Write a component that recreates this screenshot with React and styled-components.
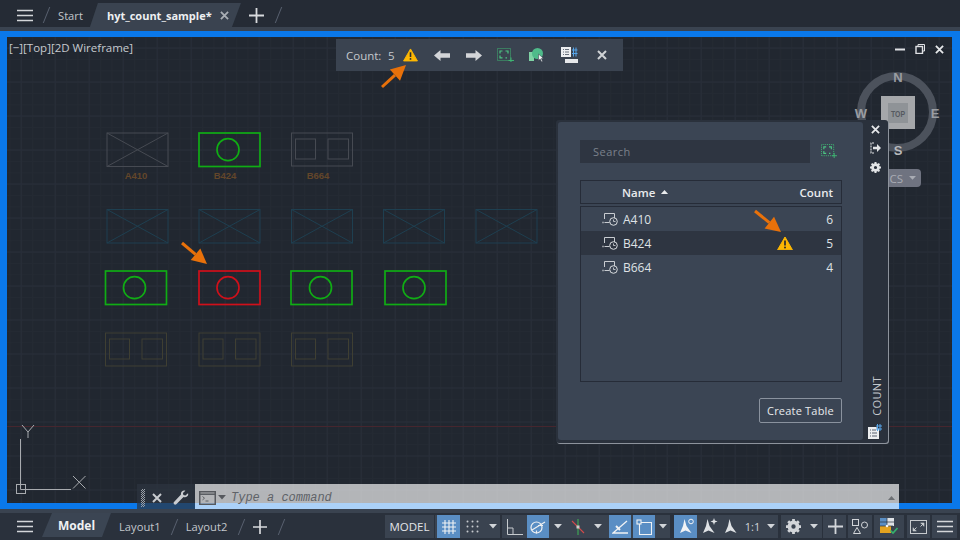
import React from 'react'
import styled, { createGlobalStyle } from 'styled-components'

const GlobalStyle = createGlobalStyle`
    html, body {
        margin: 0;
        padding: 0;
        background: #2a313c;
    }

    body {
        font-family: "Open Sans", "Noto Sans", sans-serif;
    }
`;

const Page = styled.div`
    display: flex;
    flex-direction: column;
    width: 960px;
    height: 540px;
    overflow: hidden;
    background: #2a313c;
`;

/* ---- top tab strip ---- */

const TabStrip = styled.div`
    display: flex;
    align-items: stretch;
    height: 27px;
    flex: none;
    padding-top: 3px;
    box-sizing: border-box;
    background: #252b35;
`;

const StripBand = styled.div`
    height: ${p => p.$h}px;
    flex: none;
    background: #3a4350;
`;

const MenuSlot = styled.div`
    display: flex;
    align-items: center;
    justify-content: center;
    width: ${p => p.$w}px;
    flex: none;
    padding-left: ${p => p.$pl || 0}px;
    box-sizing: border-box;
`;

const Slash = styled.div`
    width: 1px;
    height: 16px;
    flex: none;
    align-self: center;
    margin: ${p => p.$m || '0'};
    background: #596170;
    transform: skewX(-22deg);
`;

const PlainTab = styled.div`
    display: flex;
    align-items: center;
    margin-left: ${p => p.$ml}px;
    font-size: 11.2px;
    color: #c3c7cc;
    white-space: nowrap;
`;

const ActiveTab = styled.div`
    display: flex;
    align-items: center;
    width: 151px;
    flex: none;
    margin-left: 7px;
    padding-left: 17px;
    box-sizing: border-box;
    gap: 8px;
    background: #3a4350;
    clip-path: polygon(8px 0, 100% 0, 142px 100%, 0 100%);
    font-size: 11px;
    font-weight: 700;
    color: #eef0f2;
    white-space: nowrap;
`;

const PlusSlot = styled.div`
    display: flex;
    align-items: center;
    margin-left: ${p => p.$ml}px;
`;

/* ---- viewport ---- */

const Viewport = styled.div`
    position: relative;
    flex: none;
    height: 478px;
    box-sizing: border-box;
    border-style: solid;
    border-color: #0a78ea;
    border-width: 6px 8px 6px 7px;
    background: #212730;
`;

const Canvas = styled.svg`
    display: block;
    width: 945px;
    height: 466px;
`;

const ViewLabel = styled.div`
    position: absolute;
    left: 2px;
    top: 3px;
    font-size: 11.5px;
    color: #c6cacf;
    white-space: nowrap;
`;

const WindowControls = styled.div`
    position: absolute;
    right: 8px;
    top: 7px;
    display: flex;
    align-items: center;
    gap: 10px;
`;

const CountBar = styled.div`
    position: absolute;
    left: 329px;
    top: 2px;
    display: flex;
    align-items: center;
    width: 287px;
    height: 32px;
    padding-left: 10px;
    box-sizing: border-box;
    background: #3a4350;
    color: #c4c8cd;
    font-size: 11.5px;
`;

const CountLabel = styled.span`
    width: 42px;
    flex: none;
`;

const CountValue = styled.span`
    width: 12px;
    flex: none;
`;

const BarIcon = styled.div`
    display: flex;
    align-items: center;
    justify-content: center;
    width: ${p => p.$w || 32}px;
    height: 32px;
    flex: none;
    margin-left: ${p => p.$ml || 0}px;
`;

const Pointer = styled.svg`
    position: absolute;
    left: ${p => p.$x}px;
    top: ${p => p.$y}px;
    z-index: 3;
`;

/* ---- view cube ---- */

const UcsPill = styled.div`
    position: absolute;
    left: 865px;
    top: 132px;
    display: flex;
    align-items: center;
    justify-content: flex-end;
    gap: 6px;
    width: 49px;
    height: 18px;
    padding-right: 5px;
    box-sizing: border-box;
    border-radius: 4px;
    background: #6f7380;
    color: #a9acb4;
    font-size: 11.5px;
`;

/* ---- count palette ---- */

const Palette = styled.div`
    position: absolute;
    left: 549px;
    top: 83px;
    display: flex;
    width: 332px;
    height: 323px;
    box-sizing: border-box;
    padding: 2px 0 3px 2px;
    background: #2a313c;
    border-radius: 3px;
    box-shadow: 1px 1px 0 #8d939c;
`;

const PaletteMain = styled.div`
    display: flex;
    flex-direction: column;
    width: 305px;
    flex: none;
    box-sizing: border-box;
    padding: 18px 21px 17px 22px;
    border-radius: 3px;
    background: #3b4554;
`;

const SearchRow = styled.div`
    display: flex;
    align-items: center;
    gap: 11px;
`;

const SearchBox = styled.div`
    display: flex;
    align-items: center;
    width: 230px;
    height: 23px;
    padding-left: 13px;
    box-sizing: border-box;
    background: #2e3541;
    color: #7b818c;
    font-size: 11px;
    letter-spacing: 0.5px;
`;

const Table = styled.div`
    display: flex;
    flex-direction: column;
    margin-top: 17px;
    width: 262px;
`;

const TableHead = styled.div`
    display: flex;
    align-items: center;
    justify-content: space-between;
    height: 24px;
    padding: 0 8px 0 41px;
    box-sizing: border-box;
    border: 1px solid #262c38;
    color: #e9ebed;
    font-size: 11.5px;
    font-weight: 600;
`;

const HeadName = styled.div`
    display: flex;
    align-items: center;
    gap: 5px;
`;

const TableBody = styled.div`
    display: flex;
    flex-direction: column;
    height: 176px;
    margin-top: 2px;
    box-sizing: border-box;
    border: 1px solid #262c38;
`;

const Row = styled.div`
    display: flex;
    align-items: center;
    height: 24px;
    flex: none;
    padding: 0 8px 0 21px;
    background: ${p => (p.$selected ? '#2e3541' : 'transparent')};
    color: #dfe2e5;
    font-size: 12px;
`;

const RowName = styled.span`
    flex: 1;
    margin-left: 5px;
`;

const RowCount = styled.span`
    margin-left: 33px;
`;

const TableFoot = styled.div`
    display: flex;
    justify-content: flex-end;
    margin-top: auto;
    width: 262px;
`;

const CreateButton = styled.button`
    width: 83px;
    height: 25px;
    padding: 0;
    border: 1px solid #8a929e;
    border-radius: 2px;
    background: transparent;
    color: #e8eaec;
    font-family: inherit;
    font-size: 11px;
    letter-spacing: 0.2px;
`;

const SideRail = styled.div`
    display: flex;
    flex-direction: column;
    align-items: center;
    flex: 1;
    padding: 0 0 2px;
    gap: 5px;
`;

const RailIcon = styled.div`
    display: flex;
    align-items: center;
    justify-content: center;
    height: 14px;
    margin-left: -1px;
`;

const RailTitle = styled.div`
    margin-top: auto;
    margin-left: 2px;
    margin-bottom: 3px;
    writing-mode: vertical-rl;
    transform: rotate(180deg);
    color: #c4c8cd;
    font-size: 11px;
    letter-spacing: 0.4px;
`;

/* ---- command line ---- */

const CommandLine = styled.div`
    position: absolute;
    left: 130px;
    bottom: -6px;
    display: flex;
    width: 762px;
    height: 25px;
    z-index: 2;
`;

const CommandTools = styled.div`
    display: flex;
    align-items: center;
    width: 58px;
    flex: none;
    padding: 2px 0 0 4px;
    box-sizing: border-box;
    gap: 7px;
    background: rgba(44, 52, 64, 0.72);
`;

const Grip = styled.div`
    width: 4px;
    height: 18px;
    background-image: repeating-conic-gradient(#9aa0a8 0 25%, transparent 0 50%);
    background-size: 2px 2px;
`;

const ToolSlot = styled.div`
    display: flex;
    margin-left: ${p => p.$ml || 0}px;
`;

const CommandInput = styled.div`
    display: flex;
    align-items: center;
    flex: 1;
    gap: 2px;
    padding: 2px 4px 0 4px;
    background: rgba(255, 255, 255, 0.66);
`;

const CommandText = styled.span`
    flex: 1;
    margin-left: 3px;
    font-family: "Liberation Mono", monospace;
    font-style: italic;
    font-size: 12px;
    color: #5f6368;
`;

/* ---- status bar ---- */

const StatusBar = styled.div`
    display: flex;
    align-items: stretch;
    flex: none;
    height: 27px;
    background: #2a313c;
`;

const ModelTab = styled.div`
    display: flex;
    align-items: center;
    justify-content: center;
    width: 69px;
    height: 24px;
    flex: none;
    background: #3b4553;
    clip-path: polygon(10px 0, 100% 0, 60px 100%, 0 100%);
    color: #f0f1f3;
    font-size: 12px;
    font-weight: 700;
`;

const StatusGroups = styled.div`
    display: flex;
    margin-left: auto;
    padding: 2px 3px 2px 0;
`;

const Group = styled.div`
    display: flex;
    align-items: stretch;
    width: ${p => p.$w}px;
    flex: none;
    margin-left: ${p => p.$ml || 0}px;
    background: #3a4350;
`;

const ModelButton = styled.div`
    display: flex;
    align-items: center;
    justify-content: center;
    width: 49px;
    flex: none;
    margin-right: 2px;
    border-right: 1px solid #2a313c;
    color: #e3e5e8;
    font-size: 11.5px;
`;

const StatusButton = styled.div`
    display: flex;
    align-items: center;
    justify-content: center;
    width: ${p => p.$w}px;
    flex: none;
    margin-left: ${p => p.$ml || 0}px;
    background: ${p => (p.$active ? '#5a8ec4' : 'transparent')};
    border-left: ${p => (p.$rule ? '1px solid #2a313c' : '0')};
    color: #d2d5d9;
    font-size: 11px;
`;

/* ---- icons ---- */

const Hamburger = ({ w = 16 }) => (
    <svg width={w} height="13" viewBox="0 0 16 13">
        <path d="M0 1.5h16M0 6.5h16M0 11.5h16" stroke="#d4d6d9" strokeWidth="1.7" />
    </svg>
);

const Plus = ({ size = 15, color = '#d8dadd' }) => (
    <svg width={size} height={size} viewBox="0 0 15 15">
        <path d="M7.5 0v15M0 7.5h15" stroke={color} strokeWidth="1.8" />
    </svg>
);

const Cross = ({ size = 10, color = '#d0d3d6', sw = 2 }) => (
    <svg width={size} height={size} viewBox="0 0 10 10">
        <path d="M1 1l8 8M9 1L1 9" stroke={color} strokeWidth={sw} />
    </svg>
);

const Warning = ({ size = 16 }) => (
    <svg width={size} height={size * 0.9} viewBox="0 0 16 14.4">
        <path d="M8 1L15.4 13.8H.6z" fill="#fdb702" stroke="#fdb702" strokeLinejoin="round" />
        <path d="M8 4.6v5" stroke="#2b2b2b" strokeWidth="1.7" />
        <circle cx="8" cy="11.6" r="1" fill="#2b2b2b" />
    </svg>
);

const Caret = ({ w = 9, color = '#d2d5d9', up }) => (
    <svg width={w} height={w * 0.55} viewBox="0 0 9 5">
        <path d={up ? 'M0 5h9L4.5 0z' : 'M0 0h9L4.5 5z'} fill={color} />
    </svg>
);

const ArrowGlyph = ({ flip }) => (
    <svg width="16" height="11" viewBox="0 0 16 11">
        <path d={flip ? 'M16 5.5L9.5 0v3.2H0v4.6h9.5V11z' : 'M0 5.5L6.5 0v3.2H16v4.6H6.5V11z'} fill="#d3d5d8" />
    </svg>
);

const SelectArea = ({ size = 17 }) => (
    <svg width={size} height={size * 0.88} viewBox="0 0 17 15">
        <rect x="0.5" y="0.5" width="13" height="12" fill="none" stroke="#3fb873" strokeDasharray="1 1" />
        <path d="M3 5.5V3h2.5M8.5 3H11v2.5M3 7.5V10h2.5M8.5 10H10" fill="none" stroke="#4cc583" strokeWidth="1.2" />
        <path d="M14 9.5V15M11.5 12.5H17" stroke="#3fb873" />
    </svg>
);

const ZoomObject = () => (
    <svg width="16" height="14" viewBox="0 0 16 14">
        <path d="M0 4h5v9H0z" fill="#7fd3a5" />
        <path d="M5 13H0V7z" fill="#7fd3a5" />
        <circle cx="8.5" cy="5.5" r="5.5" fill="#4fbb8a" />
        <path d="M9.5 6l5 4.4-2.2.2 1.3 2.6-1.2.6-1.2-2.7-1.7 1.4z" fill="#f2f3f4" stroke="#333a46" strokeWidth=".5" />
    </svg>
);

const TableIcon = () => (
    <svg width="17" height="17" viewBox="0 0 17 17">
        <path d="M0 0h10v10H0z" fill="#eceef0" />
        <path d="M2 2.5h1M4 2.5h4M2 5h1M4 5h4M2 7.5h1M4 7.5h4" stroke="#59616e" strokeWidth=".9" />
        <path d="M12.5 .5v9M15 .5v9M11 3h5.5M11 6.5h5.5" stroke="#57a6ea" strokeWidth="1" />
        <path d="M4 12h13v4H4z" fill="#e6e8ea" />
    </svg>
);

const CountDoc = () => (
    <svg width="14" height="15" viewBox="0 0 14 15">
        <path d="M0 3h8l3 2v10H0z" fill="#eceef0" />
        <path d="M2 6h1M4 6h4M2 9h1M4 9h5M2 12h1M4 12h5" stroke="#59616e" strokeWidth="1" />
        <path d="M9.5 0v7M12 0v7M8 2h6M8 5h6" stroke="#57a6ea" strokeWidth="1" />
    </svg>
);

const BlockIcon = () => (
    <svg width="16" height="13" viewBox="0 0 16 13">
        <path d="M2.5 6V.5h10V5" fill="none" stroke="#c8ccd1" />
        <path d="M.5 9.5h1" stroke="#eceef0" strokeWidth="1.4" />
        <path d="M2.5 9.5h5" stroke="#c8ccd1" />
        <circle cx="11.5" cy="8.5" r="3.8" fill="none" stroke="#d8dbde" />
        <path d="M11.5 6.5v2h2" fill="none" stroke="#d8dbde" strokeWidth=".8" />
    </svg>
);

const Gear = ({ size = 11, color = '#e2e4e6' }) => (
    <svg width={size} height={size} viewBox="0 0 24 24">
        <circle cx="12" cy="12" r="6.5" fill="none" stroke={color} strokeWidth="6" />
        <path d="M12 0v5M12 19v5M0 12h5M19 12h5M3.5 3.5L7 7M17 17l3.5 3.5M20.5 3.5L17 7M7 17l-3.5 3.5" stroke={color} strokeWidth="4.4" />
    </svg>
);

const ExportIcon = () => (
    <svg width="11" height="12" viewBox="0 0 11 12">
        <path d="M4 1H1v10h3" fill="none" stroke="#e2e4e6" strokeWidth="1.1" strokeDasharray="2 .8" />
        <path d="M3 4.7h4V2l4 4-4 4V7.3H3z" fill="#e2e4e6" />
    </svg>
);

const WrenchIcon = () => (
    <svg width="16" height="16" viewBox="0 0 16 16">
        <path d="M15 3.2l-2.6 2.4-2-.6-.5-2L12.4.8C10-.2 7.4 1.8 8 4.6L1 12c-1.4 1.6.8 3.6 2.3 2.2L10.5 7c3 .9 5.5-1.3 4.5-3.800z" fill="#c9ccd0" />
    </svg>
);

const PromptIcon = () => (
    <svg width="17" height="14" viewBox="0 0 17 14">
        <path d="M.75.75h15.5v12.5H.75z" fill="none" stroke="#56595e" strokeWidth="1.5" />
        <path d="M.75 3.2h15.5" stroke="#56595e" strokeWidth="1.5" />
        <path d="M3.5 5.5l2 1.7-2 1.7M6.5 10h3" fill="none" stroke="#56595e" strokeWidth=".9" />
    </svg>
);

const GridIcon = () => (
    <svg width="14" height="14" viewBox="0 0 14 14">
        <path d="M3 0v14M7 0v14M11 0v14M0 3h14M0 7h14M0 11h14" stroke="#f0f2f4" strokeWidth="1.1" />
    </svg>
);

const SnapDots = () => (
    <svg width="13" height="13" viewBox="0 0 13 13" fill="#c6cace">
        {[1.5, 6.5, 11.5].flatMap(y => [1.5, 6.5, 11.5].map(x => (
            <circle key={`${x}-${y}`} cx={x} cy={y} r="1" />
        )))}
    </svg>
);

const OrthoIcon = () => (
    <svg width="16" height="16" viewBox="0 0 16 16" fill="none" stroke="#c6cace">
        <path d="M.5 0v15.5H16" />
        <path d="M.5 9H6v6.5" />
    </svg>
);

const PolarIcon = () => (
    <svg width="16" height="14" viewBox="0 0 16 14" fill="none" stroke="#eef0f2" strokeWidth="1.2">
        <circle cx="6.5" cy="7.5" r="5.5" />
        <path d="M2 10L15 2M8 5.5h5M6.5 10.5v3" />
    </svg>
);

const IsoIcon = () => (
    <svg width="14" height="16" viewBox="0 0 14 16" fill="none">
        <path d="M7 0v16" stroke="#3fae55" strokeWidth="1.1" />
        <path d="M1 2l6 6" stroke="#d24b4b" strokeWidth="1.1" />
        <path d="M7 8l6 6" stroke="#d24b4b" strokeWidth="1.1" />
        <rect x="5.5" y="6.5" width="3" height="3" fill="#ccc" />
    </svg>
);

const AngleIcon = () => (
    <svg width="16" height="14" viewBox="0 0 16 14" fill="none" stroke="#f0f2f4" strokeWidth="1.3">
        <path d="M15 1L1 13h15" />
        <path d="M4 6l4 4" strokeWidth="2" stroke="#f0f2f4" />
    </svg>
);

const BoxIcon = () => (
    <svg width="16" height="16" viewBox="0 0 16 16" fill="none" stroke="#f0f2f4">
        <path d="M3.5 3.5h12v12h-12z" strokeWidth="1.1" />
        <rect x="1" y="1" width="4" height="4" fill="#5a8ec4" strokeWidth="1.1" />
    </svg>
);

const AnnotateIcon = ({ mark, color = '#dfe2e5' }) => (
    <svg width="18" height="17" viewBox="0 0 18 17">
        <path d="M7.5 1l2 7 5 7-6-2.500L3 15l3-7z" fill={color} />
        {mark === 'circle' && <circle cx="14" cy="3.5" r="2.3" fill="none" stroke={color} />}
        {mark === 'star' && <path d="M14 0l.9 2.6 2.6.9-2.6.9-.9 2.6-.9-2.6-2.6-.9 2.6-.9z" fill={color} />}
    </svg>
);

const ShapesIcon = () => (
    <svg width="16" height="15" viewBox="0 0 16 15" fill="none" stroke="#d2d5d9">
        <rect x=".5" y=".5" width="6" height="6" />
        <circle cx="12.5" cy="6" r="3" />
        <path d="M5 8.5l3.5 6h-7z" />
    </svg>
);

const WorkspaceIcon = () => (
    <svg width="18" height="17" viewBox="0 0 18 17">
        <path d="M0 0h7v8H0z" fill="#5a8ec4" />
        <path d="M7 0h7v8H7z" fill="#dfe2e6" />
        <path d="M0 8h11v7H0z" fill="#e3a320" />
        <path d="M7 0v8M0 4h14M0 8h13" stroke="#2a313c" strokeWidth=".7" />
        <circle cx="7" cy="8" r="1.3" fill="#f2f3f4" />
        <path d="M10.5 12.5l2.5 2.500 4.500-5" fill="none" stroke="#35b26c" strokeWidth="1.6" />
    </svg>
);

const FullscreenIcon = () => (
    <svg width="17" height="14" viewBox="0 0 17 14" fill="none" stroke="#c6cace">
        <rect x=".5" y=".5" width="16" height="13" />
        <path d="M3.5 10.5l3-3M10.5 6.5l3-3" />
        <path d="M3 7.5V11h3.5M10.5 3H14v3.5" fill="#c6cace" strokeWidth=".6" />
    </svg>
);

const OrangeArrow = ({ x1, y1, x2, y2 }) => {
    const w = Math.abs(x2 - x1);
    const h = Math.abs(y2 - y1);
    const len = Math.hypot(x2 - x1, y2 - y1);
    const ux = (x2 - x1) / len;
    const uy = (y2 - y1) / len;
    const bx = x2 - ux * 15;
    const by = y2 - uy * 15;
    const left = Math.min(x1, x2) - 7;
    const top = Math.min(y1, y2) - 7;
    const tx = x2 - left;
    const ty = y2 - top;
    const head = `${tx},${ty} ${bx - left - uy * 7.5},${by - top + ux * 7.5} ${bx - left + uy * 7.5},${by - top - ux * 7.5}`;
    return (
        <Pointer $x={left - 7} $y={top - 37} width={w + 14} height={h + 14}>
            <line x1={x1 - left} y1={y1 - top} x2={bx - left} y2={by - top} stroke="#e8710a" strokeWidth="3" />
            <polygon points={head} fill="#e8710a" />
        </Pointer>
    );
};

/* ---- drawing on the canvas ---- */

const GRAY = '#464a52';
const TEAL = '#1e3f50';
const OLIVE = '#3f3f32';
const GREEN = '#10ad14';
const RED = '#d0101a';

const CrossBlock = ({ x, y, color }) => (
    <g fill="none" stroke={color}>
        <rect x={x} y={y} width="61" height="33.5" />
        <path d={`M${x} ${y}l61 33.5M${x + 61} ${y}l-61 33.5`} />
    </g>
);

const CircleBlock = ({ x, y, cx, color }) => (
    <g fill="none" stroke={color} strokeWidth="1.7">
        <rect x={x} y={y} width="61" height="33.5" />
        <circle cx={cx} cy={y + 16.7} r="11" />
    </g>
);

const DoubleBlock = ({ x, y, color }) => (
    <g fill="none" stroke={color}>
        <rect x={x} y={y} width="61" height="33" />
        <rect x={x + 4} y={y + 6} width="20" height="20" />
        <rect x={x + 36.5} y={y + 6} width="20.5" height="20" />
    </g>
);

const BlockLabel = styled.text`
    font-family: "Liberation Sans", sans-serif;
    font-size: 9.5px;
    font-weight: 700;
    fill: #63462a;
    text-anchor: middle;
`;

const CubeLetter = styled.text`
    font-family: "Liberation Sans", sans-serif;
    font-size: 13px;
    font-weight: 700;
    fill: ${p => p.$fill || '#9a9da2'};
    text-anchor: middle;
`;

const CubeTop = styled.text`
    font-family: "Liberation Sans", sans-serif;
    font-size: 9.5px;
    font-weight: 700;
    fill: #55595f;
    text-anchor: middle;
`;

const Drawing = () => (
    <Canvas viewBox="7 37 945 466">
        <defs>
            <pattern id="minor" x="20.7" y="489.5" width="11.33" height="11.33" patternUnits="userSpaceOnUse">
                <path d="M.5 0v11.33M0 .5h11.33" stroke="#242a33" fill="none" />
            </pattern>
            <pattern id="major" x="20.7" y="489.5" width="34" height="34" patternUnits="userSpaceOnUse">
                <path d="M.5 0v34M0 .5h34" stroke="#282e39" fill="none" />
            </pattern>
        </defs>
        <rect x="7" y="37" width="945" height="466" fill="#212730" />
        <rect x="7" y="37" width="945" height="466" fill="url(#minor)" />
        <rect x="7" y="37" width="945" height="466" fill="url(#major)" />
        <path d="M7 426.5h945" stroke="#46262e" />

        <CrossBlock x={107} y={133} color={GRAY} />
        <CircleBlock x={199} y={133} cx={228} color={GREEN} />
        <DoubleBlock x={291.5} y={133} color={GRAY} />
        <BlockLabel x="136" y="178.5">A410</BlockLabel>
        <BlockLabel x="225" y="178.5">B424</BlockLabel>
        <BlockLabel x="318" y="178.5">B664</BlockLabel>

        {[107, 199, 291.5, 383.5, 476].map(x => (
            <CrossBlock key={x} x={x} y={209.5} color={TEAL} />
        ))}

        <CircleBlock x={105.5} y={271} cx={134.5} color={GREEN} />
        <CircleBlock x={199} y={271} cx={228} color={RED} />
        <CircleBlock x={291} y={271} cx={320.5} color={GREEN} />
        <CircleBlock x={385} y={271} cx={414} color={GREEN} />

        {[105.5, 199, 291.5].map(x => (
            <DoubleBlock key={x} x={x} y={333} color={OLIVE} />
        ))}

        <g fill="none" stroke="#a8abaf">
            <path d="M20.5 439v50.5H71" />
            <rect x="16.5" y="484.5" width="9" height="9" />
            <path d="M73 476l12.5 12.5M85.5 476L73 488.5" />
            <path d="M22 425l6 7 6-7M28 432v6" />
        </g>

        <circle cx="897" cy="112" r="36" fill="none" stroke="#4c525c" strokeWidth="8" />
        <rect x="881" y="96" width="34" height="33" fill="#a5a7aa" />
        <rect x="888" y="103" width="20" height="20" fill="#8f9397" />
        <CubeTop x="898" y="116.5" textLength="14" lengthAdjust="spacingAndGlyphs">TOP</CubeTop>
        <CubeLetter x="898" y="82">N</CubeLetter>
        <CubeLetter x="898" y="155" $fill="#b6b8bb">S</CubeLetter>
        <CubeLetter x="861" y="118">W</CubeLetter>
        <CubeLetter x="935" y="118">E</CubeLetter>
    </Canvas>
);

const blocks = [
    { name: 'A410', count: 6 },
    { name: 'B424', count: 5, warn: true },
    { name: 'B664', count: 4 },
];

export default function App() {
    return (
        <Page>
            <GlobalStyle />
            <TabStrip>
                <MenuSlot $w={50}><Hamburger /></MenuSlot>
                <Slash $m="0 0 0 -4px" />
                <PlainTab $ml={11}>Start</PlainTab>
                <ActiveTab>
                    hyt_count_sample*
                    <Cross size={9} color="#a9aeb5" />
                </ActiveTab>
                <PlusSlot $ml={8}><Plus /></PlusSlot>
                <Slash $m="0 0 0 14px" />
            </TabStrip>
            <StripBand $h={4} />
            <Viewport>
                <Drawing />
                <ViewLabel>[−][Top][2D Wireframe]</ViewLabel>
                <WindowControls>
                    <svg width="10" height="3" viewBox="0 0 10 3"><path d="M0 1.5h10" stroke="#dfe1e4" strokeWidth="2" /></svg>
                    <svg width="10" height="10" viewBox="0 0 10 10" fill="none" stroke="#dfe1e4">
                        <path d="M3 2V.5h6.5V7H8" />
                        <rect x="1" y="2.5" width="6.5" height="7" strokeWidth="1.4" />
                    </svg>
                    <Cross size={9} color="#e6e8ea" />
                </WindowControls>

                <UcsPill>
                    CS
                    <Caret w={7} color="#a9acb4" />
                </UcsPill>

                <CountBar>
                    <CountLabel>Count:</CountLabel>
                    <CountValue>5</CountValue>
                    <BarIcon $w={20}><Warning size={15} /></BarIcon>
                    <BarIcon $ml={6}><ArrowGlyph /></BarIcon>
                    <BarIcon $w={31}><ArrowGlyph flip /></BarIcon>
                    <BarIcon><SelectArea /></BarIcon>
                    <BarIcon><ZoomObject /></BarIcon>
                    <BarIcon><TableIcon /></BarIcon>
                    <BarIcon $w={33}><Cross size={10} /></BarIcon>
                </CountBar>
                <OrangeArrow x1={382} y1={87} x2={406} y2={65} />
                <OrangeArrow x1={182} y1={243} x2={207} y2={264} />

                <Palette>
                    <PaletteMain>
                        <SearchRow>
                            <SearchBox>Search</SearchBox>
                            <SelectArea size={16} />
                        </SearchRow>
                        <Table>
                            <TableHead>
                                <HeadName>
                                    Name
                                    <Caret w={9} color="#e9ebed" up />
                                </HeadName>
                                <span>Count</span>
                            </TableHead>
                            <TableBody>
                                {blocks.map(b => (
                                    <Row key={b.name} $selected={b.warn}>
                                        <BlockIcon />
                                        <RowName>{b.name}</RowName>
                                        {b.warn && <Warning size={16} />}
                                        <RowCount>{b.count}</RowCount>
                                    </Row>
                                ))}
                            </TableBody>
                        </Table>
                        <TableFoot>
                            <CreateButton>Create Table</CreateButton>
                        </TableFoot>
                    </PaletteMain>
                    <SideRail>
                        <RailIcon><Cross size={9} color="#e6e8ea" /></RailIcon>
                        <RailIcon><ExportIcon /></RailIcon>
                        <RailIcon><Gear /></RailIcon>
                        <RailTitle>COUNT</RailTitle>
                        <RailIcon><CountDoc /></RailIcon>
                    </SideRail>
                </Palette>
                <OrangeArrow x1={755} y1={211} x2={781} y2={232} />

                <CommandLine>
                    <CommandTools>
                        <Grip />
                        <Cross size={10} color="#c9ccd0" />
                        <ToolSlot $ml={4}><WrenchIcon /></ToolSlot>
                    </CommandTools>
                    <CommandInput>
                        <PromptIcon />
                        <Caret w={8} color="#56595e" />
                        <CommandText>Type a command</CommandText>
                        <svg width="7" height="4" viewBox="0 0 7 4"><path d="M0 4h7L3.5 0z" fill="#6d7074" /></svg>
                    </CommandInput>
                </CommandLine>
            </Viewport>
            <StripBand $h={4} />
            <StatusBar>
                <MenuSlot $w={42} $pl={8}><Hamburger /></MenuSlot>
                <ModelTab>Model</ModelTab>
                <PlainTab $ml={8}>Layout1</PlainTab>
                <Slash $m="0 0 0 13px" />
                <PlainTab $ml={11}>Layout2</PlainTab>
                <Slash $m="0 0 0 14px" />
                <PlusSlot $ml={11}><Plus size={14} /></PlusSlot>
                <Slash $m="0 0 0 14px" />
                <StatusGroups>
                    <Group $w={115}>
                        <ModelButton>MODEL</ModelButton>
                        <StatusButton $w={23} $active><GridIcon /></StatusButton>
                        <StatusButton $w={25}><SnapDots /></StatusButton>
                        <StatusButton $w={16}><Caret w={8} /></StatusButton>
                    </Group>
                    <Group $w={168} $ml={2}>
                        <StatusButton $w={25}><OrthoIcon /></StatusButton>
                        <StatusButton $w={22} $active><PolarIcon /></StatusButton>
                        <StatusButton $w={18}><Caret w={8} /></StatusButton>
                        <StatusButton $w={21}><IsoIcon /></StatusButton>
                        <StatusButton $w={20}><Caret w={8} /></StatusButton>
                        <StatusButton $w={22} $ml={1} $active><AngleIcon /></StatusButton>
                        <StatusButton $w={22} $ml={2} $active><BoxIcon /></StatusButton>
                        <StatusButton $w={15}><Caret w={8} /></StatusButton>
                    </Group>
                    <Group $w={104} $ml={4}>
                        <StatusButton $w={23} $active><AnnotateIcon mark="circle" color="#f2f3f5" /></StatusButton>
                        <StatusButton $w={23}><AnnotateIcon mark="star" /></StatusButton>
                        <StatusButton $w={21}><AnnotateIcon /></StatusButton>
                        <StatusButton $w={23}>1:1</StatusButton>
                        <StatusButton $w={14}><Caret w={8} /></StatusButton>
                    </Group>
                    <Group $w={65} $ml={3}>
                        <StatusButton $w={24}><Gear size={15} color="#d2d5d9" /></StatusButton>
                        <StatusButton $w={17}><Caret w={8} /></StatusButton>
                        <StatusButton $w={24} $rule><Plus size={15} color="#d2d5d9" /></StatusButton>
                    </Group>
                    <Group $w={24} $ml={2}><StatusButton $w={24}><ShapesIcon /></StatusButton></Group>
                    <Group $w={30} $ml={2}><StatusButton $w={30}><WorkspaceIcon /></StatusButton></Group>
                    <Group $w={23} $ml={3}><StatusButton $w={23}><FullscreenIcon /></StatusButton></Group>
                    <Group $w={25} $ml={2}><StatusButton $w={25}><Hamburger /></StatusButton></Group>
                </StatusGroups>
            </StatusBar>
        </Page>
    );
}
